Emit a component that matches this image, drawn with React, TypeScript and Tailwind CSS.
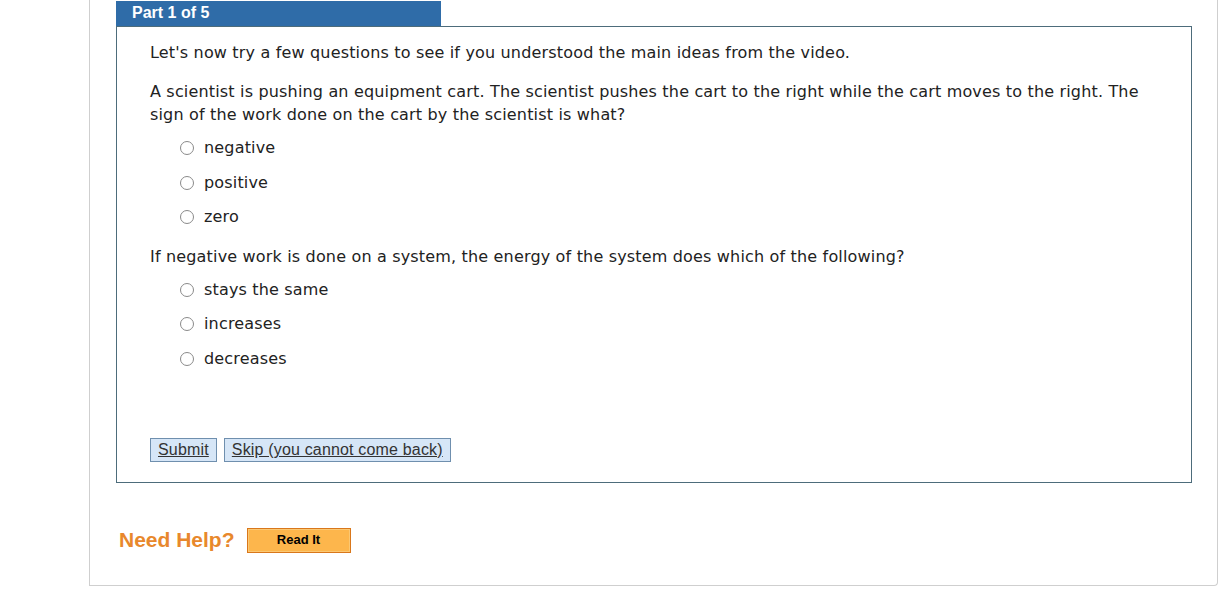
import React from "react";

const Radio = ({ label }: { label: string }) => (
  <label className="flex items-center h-[34.5px] pl-[30px]">
    <span className="w-[14px] h-[14px] rounded-full border border-[#8a8a8a] bg-white mr-[10px] shrink-0" />
    <span>{label}</span>
  </label>
);

export default function App() {
  return (
    <div className="w-[1224px] h-[616px] bg-white overflow-hidden">
      <div className="ml-[89px] w-[1129px] h-[586px] border-l border-r border-b border-[#cfcfcf] rounded-br-[4px] pl-[26px] pt-[1px]">
        <div className="w-[325px] h-[25px] bg-[#2f6ca8] text-white font-bold text-[16px] pl-[16px] leading-[24px]" style={{ fontFamily: '"Liberation Sans", Arial, sans-serif' }}>
          Part 1 of 5
        </div>
        <div
          className="w-[1076px] h-[457px] border border-[#4d6c7b] pl-[33px] pr-[30px] pt-[14px] text-[16px] text-[#222] tracking-[0.17px]"
          style={{ fontFamily: '"DejaVu Sans", Verdana, sans-serif' }}
        >
          <p className="leading-[23px]">Let's now try a few questions to see if you understood the main ideas from the video.</p>
          <p className="leading-[23px] mt-[16px]">
            A scientist is pushing an equipment cart. The scientist pushes the cart to the right while the cart moves to the right. The sign of the work done on the cart by the scientist is what?
          </p>
          <div className="mt-[5px]">
            <Radio label="negative" />
            <Radio label="positive" />
            <Radio label="zero" />
          </div>
          <p className="leading-[23px] mt-[10px]">If negative work is done on a system, the energy of the system does which of the following?</p>
          <div className="mt-[5px]">
            <Radio label="stays the same" />
            <Radio label="increases" />
            <Radio label="decreases" />
          </div>
          <div className="flex gap-[7px] mt-[62px]" style={{ fontFamily: '"Liberation Sans", Arial, sans-serif' }}>
            <button className="h-[24px] px-[7px] bg-[#d6e6f7] border border-[#6f8fae] text-[#333] text-[16px] underline leading-[20px]">Submit</button>
            <button className="h-[24px] px-[7px] bg-[#d6e6f7] border border-[#6f8fae] text-[#333] text-[16px] underline leading-[20px]">Skip (you cannot come back)</button>
          </div>
        </div>
        <div className="flex items-center mt-[44px] pl-[3px]" style={{ fontFamily: '"Liberation Sans", Arial, sans-serif' }}>
          <span className="text-[#e8882c] font-bold text-[21px] leading-[26px]">Need Help?</span>
          <button className="ml-[12px] w-[104px] h-[25px] bg-[#fdb64c] border border-[#d9771b] shadow-[inset_0_0_0_1px_#fbc873] text-black font-bold text-[13px] leading-[22px]">
            Read It
          </button>
        </div>
      </div>
    </div>
  );
}
